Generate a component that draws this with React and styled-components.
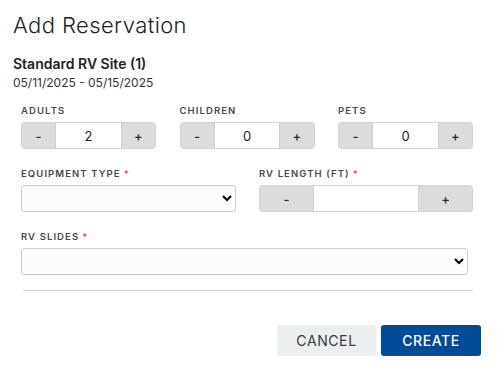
import React from "react";
import styled, { createGlobalStyle } from "styled-components";

const GlobalStyle = createGlobalStyle`
  body {
    margin: 0;
    background: #ffffff;
    font-family: "Inter", "Open Sans", sans-serif;
    color: #222;
  }
`;

const Dialog = styled.div`
  width: 497px;
  height: 368px;
  box-sizing: border-box;
  padding: 10px 16px 0 13px;
`;

const Title = styled.h1`
  margin: 0;
  font-size: 22px;
  font-weight: 300;
  letter-spacing: 0.4px;
  color: #222;
  line-height: 30px;
`;

const SiteName = styled.div`
  margin-top: 15px;
  font-size: 14px;
  font-weight: 600;
  line-height: 17px;
`;

const Dates = styled.div`
  font-size: 12px;
  line-height: 15px;
  color: #333;
  margin-top: 3px;
`;

const Form = styled.div`
  padding: 0 8px 0 8px;
  margin-top: 15px;
  display: flex;
  flex-direction: column;
  gap: 19px;
`;

const Row = styled.div`
  display: grid;
  grid-template-columns: ${(p) => (p.cols === 3 ? "135px 135px 135px" : p.cols === 2 ? "215px 214px" : "447px")};
  justify-content: space-between;
`;

const Field = styled.div`
  display: flex;
  flex-direction: column;
  gap: 5px;
`;

const Label = styled.label`
  font-size: 9.5px;
  font-weight: 600;
  letter-spacing: 1.1px;
  color: #45484f;
  line-height: 12px;
  text-transform: uppercase;
`;

const Req = styled.span`
  color: #e05252;
  margin-left: 3px;
`;

const Stepper = styled.div`
  display: grid;
  grid-template-columns: 1fr 2fr 1fr;
  height: 27px;
  border: 1px solid #d4d4d4;
  border-radius: 3px;
  overflow: hidden;
  box-sizing: border-box;
`;

const StepButton = styled.button`
  border: none;
  margin: 0;
  padding: 0;
  background: #dcdcdc;
  font-family: "Inter", sans-serif;
  font-size: 13px;
  font-weight: 500;
  color: #1f2a44;
  cursor: pointer;
`;

const StepInput = styled.input`
  border: none;
  border-left: 1px solid #cfcfcf;
  border-right: 1px solid #cfcfcf;
  min-width: 0;
  text-align: center;
  font-family: "Inter", sans-serif;
  font-size: 13px;
  color: #222;
  background: #fff;
  padding: 0;
  outline: none;
`;

const Select = styled.select`
  height: 27px;
  width: 100%;
  border: 1px solid #cccccc;
  border-radius: 3px;
  background: #fcfcfc;
  font-family: "Inter", sans-serif;
  font-size: 13px;
`;

const Divider = styled.hr`
  border: none;
  border-top: 1px solid #d2d2d2;
  margin: 15px 8px 0 10px;
`;

const Actions = styled.div`
  display: flex;
  justify-content: flex-end;
  gap: 5px;
  margin-top: 34px;
`;

const ActionButton = styled.button`
  width: ${(p) => (p.primary ? "100px" : "99px")};
  height: 31px;
  border: none;
  border-radius: 3px;
  font-family: "Inter", sans-serif;
  font-size: 14px;
  letter-spacing: 0.6px;
  background: ${(p) => (p.primary ? "#004b97" : "#eceff0")};
  color: ${(p) => (p.primary ? "#ffffff" : "#3a3a3a")};
  font-weight: ${(p) => (p.primary ? 500 : 400)};
`;

const CountStepper = ({ value }) => (
  <Stepper>
    <StepButton>-</StepButton>
    <StepInput defaultValue={value} />
    <StepButton>+</StepButton>
  </Stepper>
);

export default function App() {
  return (
    <Dialog>
      <GlobalStyle />
      <Title>Add Reservation</Title>
      <SiteName>Standard RV Site (1)</SiteName>
      <Dates>05/11/2025 - 05/15/2025</Dates>
      <Form>
        <Row cols={3}>
          <Field>
            <Label>Adults</Label>
            <CountStepper value="2" />
          </Field>
          <Field>
            <Label>Children</Label>
            <CountStepper value="0" />
          </Field>
          <Field>
            <Label>Pets</Label>
            <CountStepper value="0" />
          </Field>
        </Row>
        <Row cols={2}>
          <Field>
            <Label>
              Equipment Type<Req>*</Req>
            </Label>
            <Select defaultValue="">
              <option value=""></option>
            </Select>
          </Field>
          <Field>
            <Label>
              RV Length (ft)<Req>*</Req>
            </Label>
            <CountStepper value="" />
          </Field>
        </Row>
        <Row cols={1}>
          <Field>
            <Label>
              RV Slides<Req>*</Req>
            </Label>
            <Select defaultValue="">
              <option value=""></option>
            </Select>
          </Field>
        </Row>
      </Form>
      <Divider />
      <Actions>
        <ActionButton>CANCEL</ActionButton>
        <ActionButton primary>CREATE</ActionButton>
      </Actions>
    </Dialog>
  );
}
